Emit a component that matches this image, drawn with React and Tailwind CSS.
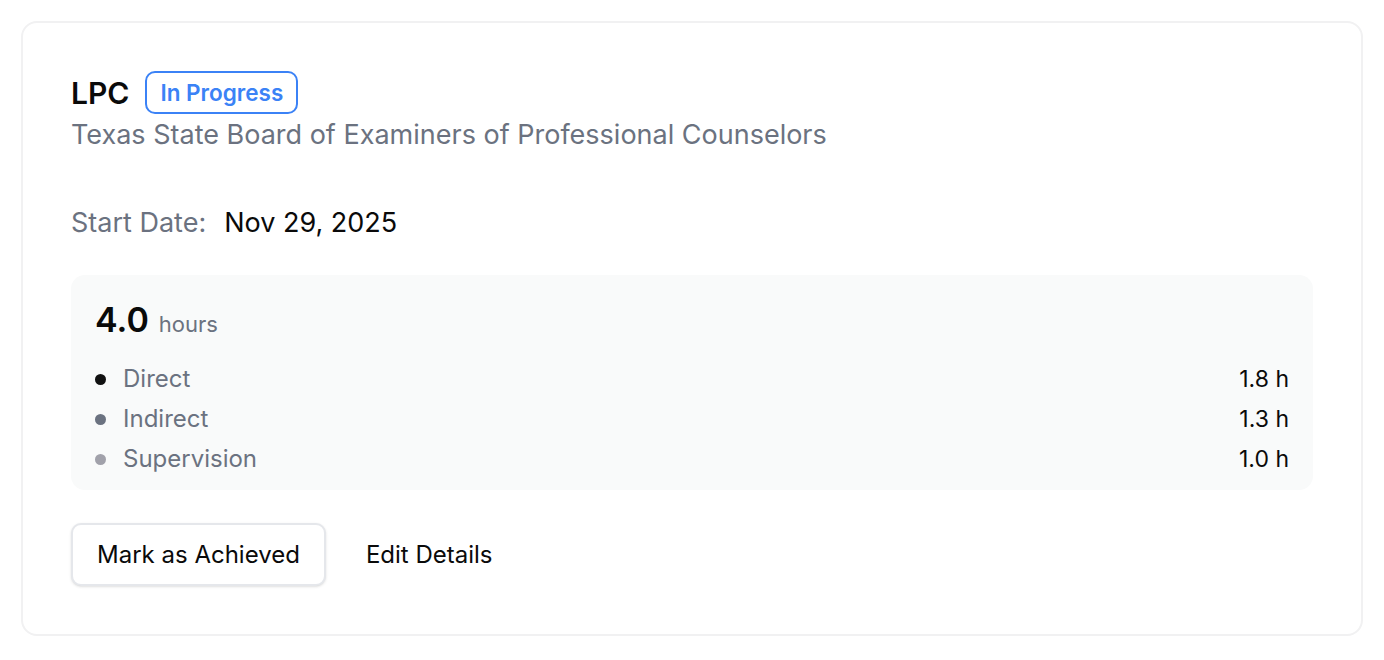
import React from 'react';

const breakdown = [
  { label: 'Direct', hours: '1.8 h', dot: 'bg-[#111111]' },
  { label: 'Indirect', hours: '1.3 h', dot: 'bg-[#6b7280]' },
  { label: 'Supervision', hours: '1.0 h', dot: 'bg-[#a1a1aa]' },
];

export default function App() {
  return (
    <div className="min-h-screen bg-white p-[21px] font-['Inter',sans-serif]">
      <div className="rounded-[16px] border-2 border-[#f1f1f2] bg-white px-[48px] pt-[48px] pb-[48px]">
        <div className="flex items-center gap-[16px]">
          <h2 className="text-[30px] font-semibold leading-none text-[#0a0a0a]">LPC</h2>
          <span className="rounded-[10px] border-2 border-[#3b82f6] px-[13px] py-[6px] text-[22.5px] font-semibold leading-[27px] text-[#3b82f6]">
            In Progress
          </span>
        </div>
        <p className="mt-[3px] text-[27px] leading-[36px] text-[#6b7280]">
          Texas State Board of Examiners of Professional Counselors
        </p>

        <div className="mt-[52px] flex items-baseline gap-[18px] text-[27px] leading-[36px]">
          <span className="text-[#6b7280]">Start Date:</span>
          <span className="text-[#0a0a0a]">Nov 29, 2025</span>
        </div>

        <div className="mt-[34px] rounded-[14px] bg-[#f9fafa] px-[24px] pt-[25px] pb-[11px]">
          <div className="flex items-baseline gap-[10px]">
            <span className="text-[34px] font-semibold leading-[40px] text-[#0a0a0a]">4.0</span>
            <span className="text-[22px] text-[#6b7280]">hours</span>
          </div>
          <ul className="mt-[18px]">
            {breakdown.map((row) => (
              <li key={row.label} className="flex h-[40px] items-center justify-between">
                <div className="flex items-center gap-[17px]">
                  <span className={`h-[11px] w-[11px] rounded-full ${row.dot}`} />
                  <span className="text-[24px] text-[#6b7280]">{row.label}</span>
                </div>
                <span className="text-[23px] text-[#0a0a0a]">{row.hours}</span>
              </li>
            ))}
          </ul>
        </div>

        <div className="mt-[33px] flex items-center gap-[20px]">
          <button className="h-[63px] rounded-[10px] border-2 border-[#e5e7eb] bg-white px-[24px] text-[24px] text-[#0a0a0a] shadow-sm">
            Mark as Achieved
          </button>
          <button className="h-[63px] px-[20px] text-[24px] text-[#0a0a0a]">
            Edit Details
          </button>
        </div>
      </div>
    </div>
  );
}
